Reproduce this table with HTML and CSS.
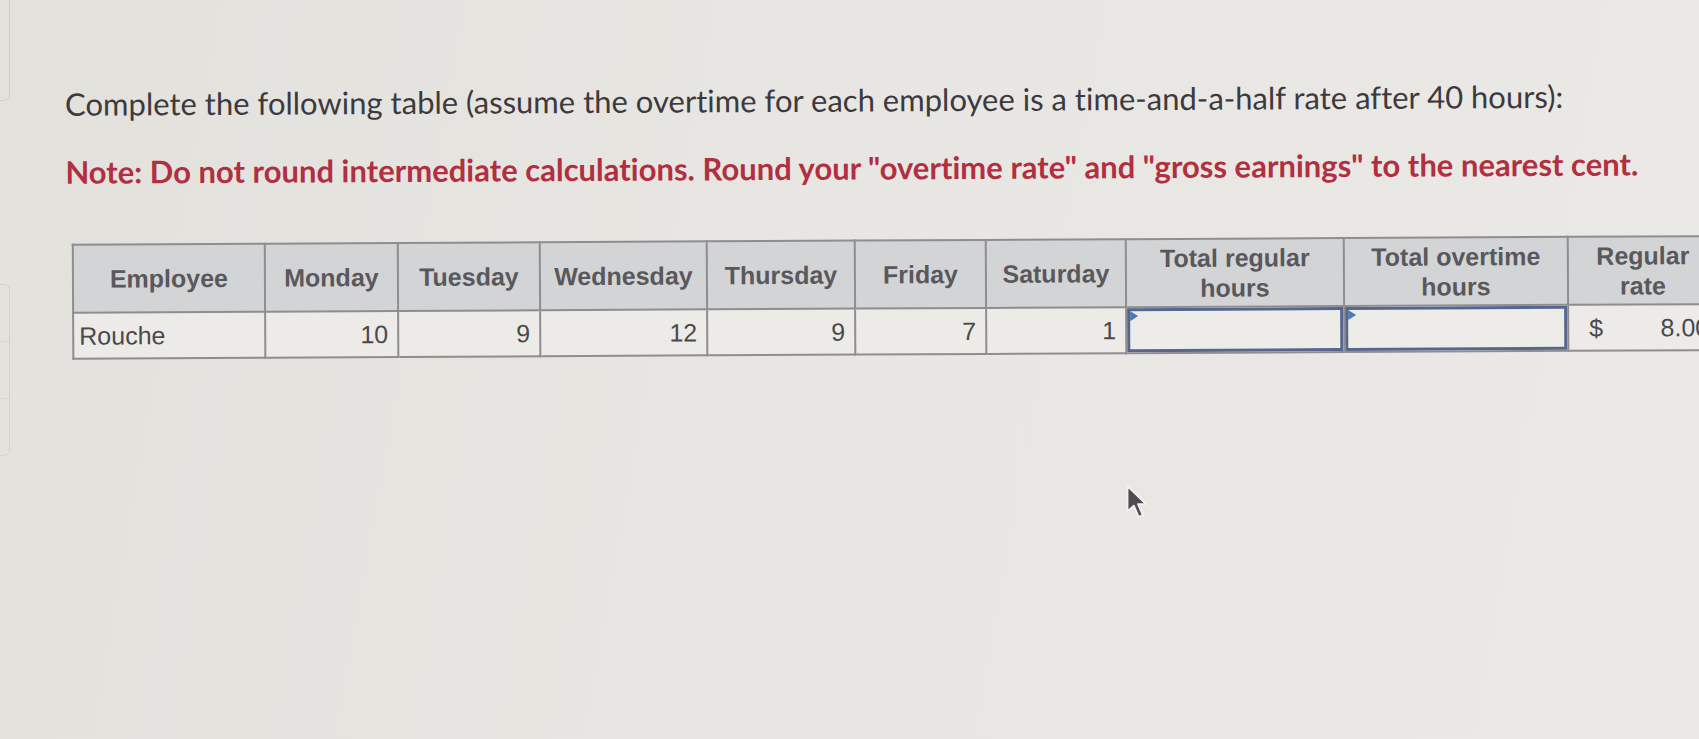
FILE: index.html
```html
<!DOCTYPE html>
<html lang="en">
<head>
<meta charset="utf-8">
<title>Payroll table</title>
<link rel="stylesheet" href="styles.css">
</head>
<body>
<div class="page">
  <div class="rail">
    <div class="rail-top"></div>
    <div class="rail-mid">
      <div class="rail-seg"></div>
      <div class="rail-seg"></div>
      <div class="rail-seg"></div>
    </div>
  </div>
  <div class="content">
    <p class="intro">Complete the following table (assume the overtime for each employee is a time-and-a-half rate after 40 hours):</p>
    <p class="note">Note: Do not round intermediate calculations. Round your "overtime rate" and "gross earnings" to the nearest cent.</p>
    <table class="pay">
      <colgroup>
        <col class="c-emp"><col class="c-mon"><col class="c-tue"><col class="c-wed"><col class="c-thu"><col class="c-fri"><col class="c-sat"><col class="c-treg"><col class="c-tot"><col class="c-rate">
      </colgroup>
      <thead>
        <tr>
          <th>Employee</th>
          <th>Monday</th>
          <th>Tuesday</th>
          <th>Wednesday</th>
          <th>Thursday</th>
          <th>Friday</th>
          <th>Saturday</th>
          <th>Total regular<br>hours</th>
          <th>Total overtime<br>hours</th>
          <th>Regular<br>rate</th>
        </tr>
      </thead>
      <tbody>
        <tr>
          <td class="name">Rouche</td>
          <td class="num">10</td>
          <td class="num">9</td>
          <td class="num">12</td>
          <td class="num">9</td>
          <td class="num">7</td>
          <td class="num">1</td>
          <td class="input-cell"><div class="input"><span class="flag"></span></div></td>
          <td class="input-cell"><div class="input"><span class="flag"></span></div></td>
          <td class="money"><span class="cur">$</span><span class="amt">8.00</span></td>
        </tr>
      </tbody>
    </table>
  </div>
</div>
<svg class="cursor" width="24" height="36" viewBox="0 0 22 34" aria-hidden="true">
  <path d="M2 2 L2 26 L8 20.5 L12.5 31 L16.5 29.3 L12 19 L19.5 19 Z" fill="#4d4c50" stroke="#f2f1ee" stroke-width="1.8" stroke-linejoin="round"/>
</svg>
</body>
</html>
```
FILE: styles.css
```css
html, body {
  margin: 0;
  padding: 0;
}
body {
  width: 1699px;
  height: 739px;
  overflow: hidden;
  background: linear-gradient(100deg, #e3e1dc 0%, #e8e6e2 45%, #ebe9e5 100%);
  position: relative;
}
.page {
  display: flex;
  height: 739px;
}
.rail {
  width: 10px;
  flex: none;
  display: flex;
  flex-direction: column;
}
.rail-top {
  height: 110px;
  margin-top: -10px;
  border-right: 1px solid #d2d0cb;
  border-bottom: 1px solid #d2d0cb;
  border-bottom-right-radius: 6px;
}
.rail-mid {
  height: 170px;
  margin-top: 183px;
  border: 1px solid #d4d2cd;
  border-left: none;
  border-radius: 0 6px 6px 0;
  display: flex;
  flex-direction: column;
}
.rail-seg {
  flex: 1;
  border-bottom: 1px solid #dad8d3;
}
.rail-seg:last-child {
  border-bottom: none;
}
.content {
  flex: 1;
  padding: 86px 0 0 55px;
  transform: rotate(-0.3deg);
  transform-origin: 0 100px;
}
.intro {
  margin: 0;
  font-family: Lato, "Open Sans", sans-serif;
  font-variant-ligatures: no-common-ligatures;
  font-size: 31px;
  line-height: 36px;
  color: #3c3a3e;
  white-space: nowrap;
}
.note {
  margin: 32px 0 0 0;
  font-family: Lato, "Open Sans", sans-serif;
  font-variant-ligatures: no-common-ligatures;
  font-size: 31px;
  line-height: 36px;
  font-weight: 700;
  color: #b22f41;
  white-space: nowrap;
}
.pay {
  margin: 54px 0 0 6px;
  border-collapse: collapse;
  table-layout: fixed;
  width: 1645px;
  font-family: "Liberation Sans", Arial, sans-serif;
  font-size: 25px;
}
.c-emp { width: 192px; }
.c-mon { width: 133px; }
.c-tue { width: 142px; }
.c-wed { width: 167px; }
.c-thu { width: 148px; }
.c-fri { width: 131px; }
.c-sat { width: 140px; }
.c-treg { width: 218px; }
.c-tot { width: 224px; }
.c-rate { width: 150px; }
.pay th, .pay td {
  border: 2px solid #8e8d90;
  padding: 0;
}
.pay th {
  height: 66px;
  background: #d3d4d6;
  color: #59585c;
  font-weight: 700;
  line-height: 30px;
  text-align: center;
  vertical-align: middle;
}
.pay td {
  height: 42px;
  background: #ecebe7;
  color: #4a494d;
  vertical-align: middle;
}
.pay td.name {
  padding-left: 5px;
  text-align: left;
}
.pay td.num {
  padding-right: 9px;
  text-align: right;
}
.pay td.input-cell {
  padding: 0;
}
.input {
  position: relative;
  height: 38px;
  border: 3px solid #56678f;
  background: #edece8;
}
.flag {
  position: absolute;
  left: 0;
  top: 0;
  width: 0;
  height: 0;
  border-top: 5px solid transparent;
  border-bottom: 5px solid transparent;
  border-left: 8px solid #4c79b6;
}
.pay td.money {
  padding: 0 8px 0 20px;
}
.cur {
  float: left;
}
.amt {
  float: right;
}
.cursor {
  position: absolute;
  left: 1125px;
  top: 484px;
}
```
